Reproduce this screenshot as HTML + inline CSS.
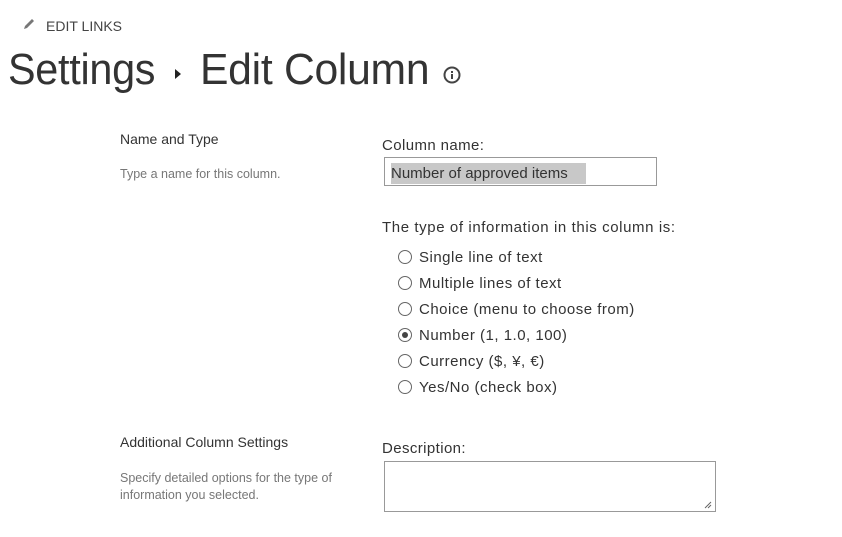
<!DOCTYPE html>
<html><head><style>
body{margin:0;width:842px;height:537px;background:#fff;font-family:"Liberation Sans",sans-serif;position:relative;overflow:hidden;color:#333}
.a{position:absolute;white-space:nowrap}
.r{position:absolute;left:398px;width:12px;height:12px;border:1px solid #666;border-radius:50%;background:#fff}
.rt{position:absolute;left:419px;font-size:15px;color:#333;white-space:nowrap;letter-spacing:0.5px}
.t{font-size:44px;color:#333;letter-spacing:-0.3px;transform:scaleX(0.97);transform-origin:left}
</style></head><body>
<svg class="a" style="left:22px;top:17px" width="14" height="14" viewBox="0 0 14 14"><path d="M2 12 L3 9 L10 2 L12 4 L5 11 Z" fill="#777"/></svg>
<div class="a" style="left:46px;top:18px;font-size:14px;color:#444">EDIT LINKS</div>
<div class="a t" style="left:8px;top:45px;transform:scaleX(0.94)">Settings</div>
<svg class="a" style="left:174px;top:68px" width="8" height="12"><path d="M1 1 L7 6 L1 11Z" fill="#222"/></svg>
<div class="a t" style="left:200px;top:45px">Edit Column</div>
<svg class="a" style="left:443px;top:66px" width="18" height="18"><circle cx="9" cy="9" r="7.5" fill="none" stroke="#444" stroke-width="2"/><rect x="8" y="8" width="2" height="5" fill="#444"/><rect x="8" y="5" width="2" height="2" fill="#444"/></svg>
<div class="a" style="left:120px;top:131px;font-size:14px;color:#333">Name and Type</div>
<div class="a" style="left:120px;top:167px;font-size:12.5px;color:#777">Type a name for this column.</div>
<div class="a" style="left:382px;top:137px;font-size:15px;color:#333;letter-spacing:0.4px">Column name:</div>
<div class="a" style="left:384px;top:157px;width:271px;height:27px;border:1px solid #999"></div>
<div class="a" style="left:391px;top:163px;height:21px;background:#c8c8c8;font-size:15px;line-height:22px;color:#333;width:195px;overflow:hidden">Number of approved items</div>
<div class="a" style="left:382px;top:219px;font-size:15px;color:#333;letter-spacing:0.6px">The type of information in this column is:</div>
<div class="r" style="top:250px"></div><div class="rt" style="top:249px">Single line of text</div>
<div class="r" style="top:276px"></div><div class="rt" style="top:275px">Multiple lines of text</div>
<div class="r" style="top:302px"></div><div class="rt" style="top:301px">Choice (menu to choose from)</div>
<div class="r" style="top:328px"></div><div class="a" style="left:402px;top:332px;width:6px;height:6px;border-radius:50%;background:#444"></div><div class="rt" style="top:327px">Number (1, 1.0, 100)</div>
<div class="r" style="top:354px"></div><div class="rt" style="top:353px">Currency ($, ¥, €)</div>
<div class="r" style="top:380px"></div><div class="rt" style="top:379px">Yes/No (check box)</div>
<div class="a" style="left:120px;top:434px;font-size:14px;color:#333">Additional Column Settings</div>
<div class="a" style="left:120px;top:470px;font-size:12.5px;color:#777;line-height:17px">Specify detailed options for the type of<br>information you selected.</div>
<div class="a" style="left:382px;top:440px;font-size:15px;color:#333;letter-spacing:0.4px">Description:</div>
<div class="a" style="left:384px;top:461px;width:330px;height:49px;border:1px solid #999"></div>
<svg class="a" style="left:704px;top:501px" width="8" height="8"><path d="M7 1 L1 7 M7 4 L4 7" stroke="#666"/></svg>
</body></html>
